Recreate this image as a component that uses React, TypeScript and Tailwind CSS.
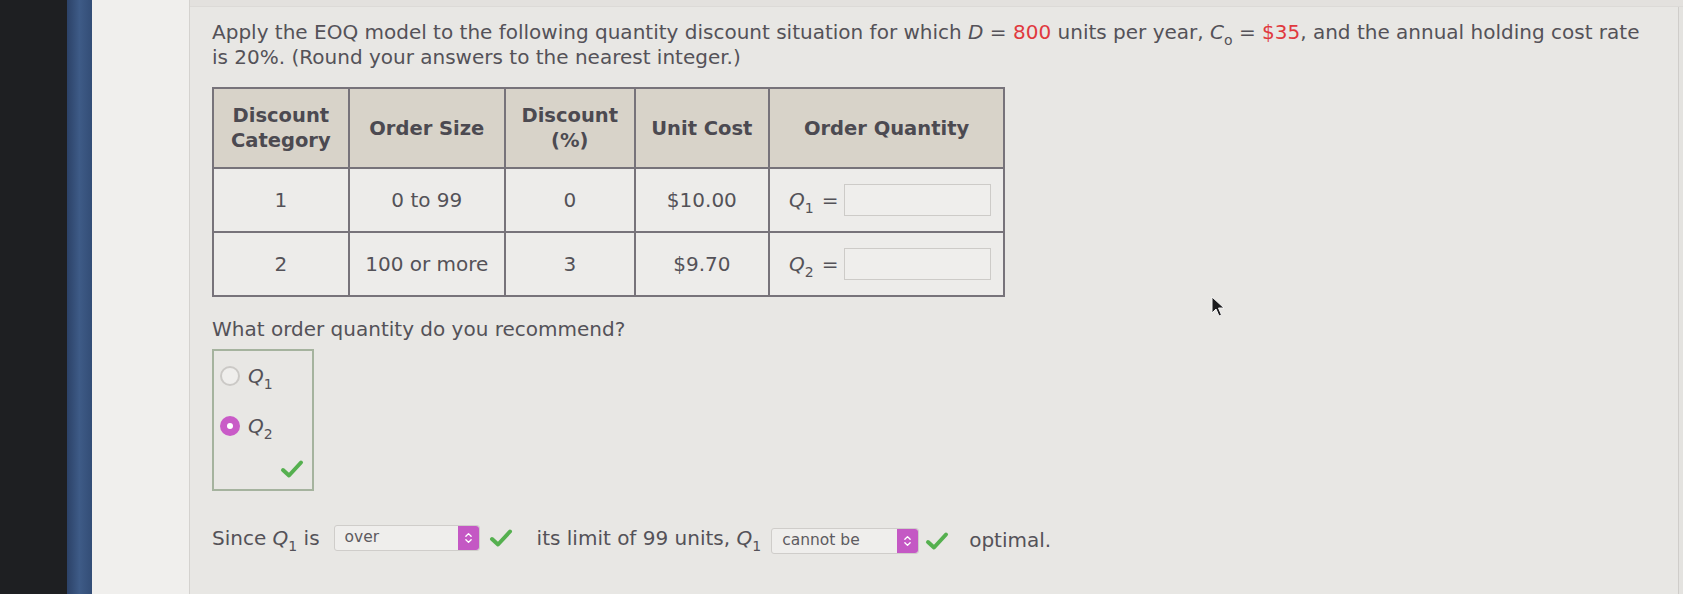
import React from "react";

function Q({ n }: { n: string }) {
  return (
    <span className="whitespace-nowrap">
      <span className="italic">Q</span>
      <span className="relative top-[6px] text-[14px]">{n}</span>
    </span>
  );
}

function Check({ className = "" }: { className?: string }) {
  return (
    <svg viewBox="0 0 24 20" className={`h-[20px] w-[24px] ${className}`}>
      <path d="M3 11 L9 16.5 L21 3.5" fill="none" stroke="#55b04f" strokeWidth="4" strokeLinecap="round" strokeLinejoin="round" />
    </svg>
  );
}

function Select({ value, width }: { value: string; width: string }) {
  return (
    <div className={`flex h-[26px] ${width} items-stretch rounded-[3px] border border-[#cfcdca] bg-[#efeeec]`}>
      <span className="flex flex-1 items-center pl-[10px] text-[15.5px] text-[#5d5b60]">{value}</span>
      <span className="flex w-[21px] items-center justify-center rounded-r-[3px] bg-[#c458c4]">
        <svg viewBox="0 0 10 16" className="h-[14px] w-[9px]">
          <path d="M2 6 L5 3 L8 6 M2 10 L5 13 L8 10" fill="none" stroke="#fff" strokeWidth="1.6" strokeLinecap="round" strokeLinejoin="round" />
        </svg>
      </span>
    </div>
  );
}

const cell = "border-2 border-[#77737a] bg-[#edecea] text-center";
const head = "border-2 border-[#77737a] bg-[#d8d3c9] text-[19.5px] font-bold leading-[25px] text-[#4c4a51]";

const rows = [
  { cat: "1", size: "0 to 99", pct: "0", cost: "$10.00", q: "1", h: "h-[64px]" },
  { cat: "2", size: "100 or more", pct: "3", cost: "$9.70", q: "2", h: "h-[64px]" },
];

export default function App() {
  return (
    <div className="relative flex h-[594px] w-[1683px] overflow-hidden bg-[#e8e7e4] font-['DejaVu_Sans',Verdana,sans-serif] text-[20px] text-[#545258]">
      <div className="w-[67px] shrink-0 bg-[#1e1f22]" />
      <div className="w-[25px] shrink-0 bg-gradient-to-r from-[#2c4268] via-[#3e5b87] to-[#334d76]" />
      <div className="w-[98px] shrink-0 border-r border-[#d4d2cf] bg-[#f0efed]" />

      <main className="flex min-w-0 flex-1 flex-col">
        <div className="h-[7px] shrink-0 border-b border-[#dcdad7] bg-[#e3e1de]" />
        <div className="flex flex-1">
          <div className="flex flex-1 flex-col pl-[22px] pt-[14px]">
            <p className="whitespace-nowrap leading-[23px]">
              Apply the EOQ model to the following quantity discount situation for which <span className="italic">D</span> ={" "}
              <span className="text-[#e0393e]">800</span> units per year, <span className="italic">C</span>
              <span className="relative top-[6px] text-[14px]">o</span> = <span className="text-[#e0393e]">$35</span>, and
              the annual holding cost rate
              <br />
              is 20%. (Round your answers to the nearest integer.)
            </p>

            <table className="mt-[18px] w-[793px] border-collapse">
              <thead>
                <tr>
                  <th className={`${head} h-[80px] w-[136px]`}>
                    Discount
                    <br />
                    Category
                  </th>
                  <th className={`${head} w-[157px]`}>Order Size</th>
                  <th className={`${head} w-[130px]`}>
                    Discount
                    <br />
                    (%)
                  </th>
                  <th className={`${head} w-[135px]`}>Unit Cost</th>
                  <th className={`${head} w-[235px]`}>Order Quantity</th>
                </tr>
              </thead>
              <tbody>
                {rows.map((r) => (
                  <tr key={r.cat}>
                    <td className={`${cell} ${r.h}`}>{r.cat}</td>
                    <td className={cell}>{r.size}</td>
                    <td className={cell}>{r.pct}</td>
                    <td className={cell}>{r.cost}</td>
                    <td className="border-2 border-[#77737a] bg-[#edecea]">
                      <div className="flex items-center pl-[19px]">
                        <Q n={r.q} />
                        <span className="ml-[8px]">=</span>
                        <div className="ml-[5px] h-[32px] w-[147px] border border-[#cdcbc8] bg-[#efeeec]" />
                      </div>
                    </td>
                  </tr>
                ))}
              </tbody>
            </table>

            <p className="mt-[20px] leading-[24px]">What order quantity do you recommend?</p>

            <div className="mt-[8px] flex h-[142px] w-[102px] flex-col border-2 border-[#a5b39e] pl-[6px] pt-[14px]">
              <div className="flex h-[22px] items-center">
                <span className="h-[20px] w-[20px] rounded-full border-2 border-[#cbc9c6] bg-[#efeeec]" />
                <span className="ml-[8px]">
                  <Q n="1" />
                </span>
              </div>
              <div className="mt-[28px] flex h-[22px] items-center">
                <span className="flex h-[20px] w-[20px] items-center justify-center rounded-full bg-[#c95bc7]">
                  <span className="h-[6px] w-[6px] rounded-full bg-white" />
                </span>
                <span className="ml-[8px]">
                  <Q n="2" />
                </span>
              </div>
              <div className="mt-[22px] flex justify-end pr-[8px]">
                <Check />
              </div>
            </div>

            <div className="mt-[33px] flex h-[28px] items-center whitespace-nowrap">
              <span>
                Since <Q n="1" /> is
              </span>
              <div className="ml-[14px]">
                <Select value="over" width="w-[146px]" />
              </div>
              <Check className="ml-[9px]" />
              <span className="ml-[24px]">
                its limit of 99 units, <Q n="1" />
              </span>
              <div className="ml-[10px] mt-[6px]">
                <Select value="cannot be" width="w-[148px]" />
              </div>
              <Check className="ml-[6px] mt-[6px]" />
              <span className="ml-[20px] mt-[4px]">optimal.</span>
            </div>
          </div>
          <div className="w-[5px] shrink-0 border-l border-[#cfcdca] bg-[#e4e3e0]" />
        </div>
      </main>

      <svg viewBox="0 0 14 22" className="absolute left-[1211px] top-[296px] h-[22px] w-[14px]">
        <path d="M1 1 L1 17 L5 13 L8 20 L10.5 19 L7.5 12 L13 12 Z" fill="#1b1b1d" stroke="#f4f4f4" strokeWidth="1" />
      </svg>
    </div>
  );
}
